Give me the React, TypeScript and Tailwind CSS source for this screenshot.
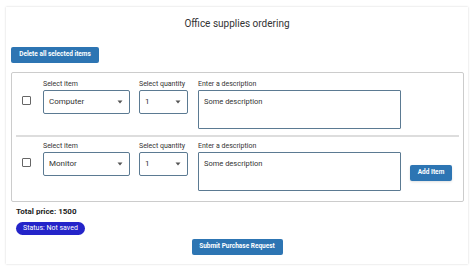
import React from 'react';

const font = { fontFamily: 'Roboto, "Liberation Sans", sans-serif' };

function Caret() {
  return (
    <svg width="6" height="4" viewBox="0 0 6 4" className="shrink-0">
      <path d="M0.5 0.5 L5.5 0.5 L3 3.5 Z" fill="#555" />
    </svg>
  );
}

function SelectBox({ value, width }: { value: string; width: string }) {
  return (
    <div
      className={`${width} h-[24px] flex items-center justify-between pl-[5px] pr-[6px] border border-[#5b7a92] rounded-[2px] bg-white text-[8px] text-[#333]`}
    >
      <span>{value}</span>
      <Caret />
    </div>
  );
}

function ItemRow({ item, last }: { item: string; last?: boolean }) {
  return (
    <div className={`flex items-start pl-[10px] ${last ? 'pt-[4px] pb-[10px]' : 'pt-[6px] pb-[6px]'}`}>
      <div className="mt-[17px] w-[9px] h-[9px] border border-[#666] rounded-[1px] bg-white shrink-0" />
      <div className="ml-[12px] flex flex-col">
        <span className="text-[7px] leading-[11px] text-[#333]">Select item</span>
        <SelectBox value={item} width="w-[87px]" />
      </div>
      <div className="ml-[9px] flex flex-col">
        <span className="text-[7px] leading-[11px] text-[#333]">Select quantity</span>
        <SelectBox value="1" width="w-[49px]" />
      </div>
      <div className="ml-[10px] flex flex-col">
        <span className="text-[7px] leading-[11px] text-[#333]">Enter a description</span>
        <div className="w-[203px] h-[39px] border border-[#5b7a92] rounded-[1px] px-[5px] pt-[5px] text-[7.5px] text-[#333]">
          Some description
        </div>
      </div>
      {last && (
        <button className="ml-[9px] mt-[24px] w-[42px] h-[16px] rounded-[2px] bg-[#2d75b3] text-white text-[6.5px] font-bold shadow-sm">
          Add Item
        </button>
      )}
    </div>
  );
}

export default function App() {
  return (
    <div className="w-[474px] h-[271px] bg-white overflow-hidden" style={font}>
      <div className="ml-[6px] mt-[7px] w-[462px] h-[257px] bg-white shadow-[0_0_2px_rgba(0,0,0,0.18)] px-[5px] flex flex-col">
        <div className="pt-[12px] text-center text-[10px] leading-[10px] text-[#333]">
          Office supplies ordering
        </div>
        <div className="mt-[18px] flex">
          <button className="w-[88px] h-[16px] rounded-[2px] bg-[#2d75b3] text-white text-[6.5px] font-bold">
            Delete all selected items
          </button>
        </div>
        <div className="mt-[9px] w-[453px] border border-[#ccc] rounded-[2px]">
          <ItemRow item="Computer" />
          <div className="mx-[4px] h-[2px] bg-[#ddd]" />
          <ItemRow item="Monitor" last />
        </div>
        <div className="mt-[4px] ml-[5px] text-[8px] leading-[12px] font-bold text-[#222]">
          Total price: 1500
        </div>
        <div className="mt-[4px] ml-[5px] flex">
          <span className="flex items-center h-[13px] px-[7px] rounded-full bg-[#2424c9] text-white text-[7px]">
            Status: Not saved
          </span>
        </div>
        <div className="mt-[4px] flex justify-center">
          <button className="w-[91px] h-[16px] rounded-[2px] bg-[#2d75b3] text-white text-[6.5px] font-bold">
            Submit Purchase Request
          </button>
        </div>
      </div>
    </div>
  );
}
